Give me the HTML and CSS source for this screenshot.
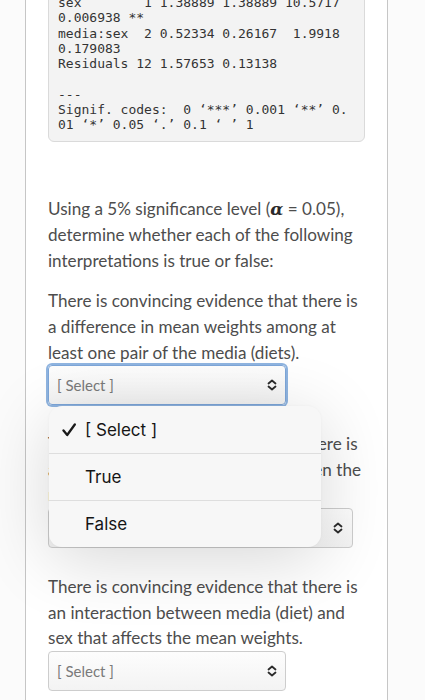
FILE: index.html
```html
<!DOCTYPE html>
<html>
<head>
<meta charset="utf-8">
<link rel="stylesheet" href="styles.css">
</head>
<body>
<div class="card">
<pre class="code">sex        1 1.38889 1.38889 10.5717 
0.006938 **
media:sex  2 0.52334 0.26167  1.9918 
0.179083
Residuals 12 1.57653 0.13138

---
Signif. codes:  0 ‘***’ 0.001 ‘**’ 0.
01 ‘*’ 0.05 ‘.’ 0.1 ‘ ’ 1</pre>
<p class="intro">Using a 5% significance level (<span class="alpha">α</span> = 0.05), determine whether each of the following interpretations is true or false:</p>
<div class="items">
  <div class="item">
    <p class="stmt">There is convincing evidence that there is a difference in mean weights among at least one pair of the media (diets).</p>
    <div class="select-wrap">
      <div class="select focused">
        <span class="sel-text">[ Select ]</span>
        <svg class="chev" width="10" height="12" viewBox="0 0 10 12"><path d="M1.5 4.5 L5 1.5 L8.5 4.5 M1.5 7.5 L5 10.5 L8.5 7.5" fill="none" stroke="#2b2b2b" stroke-width="1.8" stroke-linecap="round" stroke-linejoin="round"/></svg>
      </div>
      <div class="menu">
        <div class="opt">
          <svg class="check" width="14" height="14" viewBox="0 0 14 14"><path d="M1.5 7.5 L5.2 12 L12.8 1.5" fill="none" stroke="#1a1a1a" stroke-width="2.3" stroke-linecap="round" stroke-linejoin="round"/></svg>
          <span>[ Select ]</span>
        </div>
        <div class="opt"><span>True</span></div>
        <div class="opt"><span>False</span></div>
      </div>
    </div>
  </div>
  <div class="item">
    <p class="stmt">There is convincing evidence that there is a difference in mean weights between the males and females.</p>
    <div class="select wide">
      <span class="sel-text">[ Select ]</span>
      <svg class="chev" width="10" height="12" viewBox="0 0 10 12"><path d="M1.5 4.5 L5 1.5 L8.5 4.5 M1.5 7.5 L5 10.5 L8.5 7.5" fill="none" stroke="#2b2b2b" stroke-width="1.8" stroke-linecap="round" stroke-linejoin="round"/></svg>
    </div>
  </div>
  <div class="item">
    <p class="stmt">There is convincing evidence that there is an interaction between media (diet) and sex that affects the mean weights.</p>
    <div class="select">
      <span class="sel-text">[ Select ]</span>
      <svg class="chev" width="10" height="12" viewBox="0 0 10 12"><path d="M1.5 4.5 L5 1.5 L8.5 4.5 M1.5 7.5 L5 10.5 L8.5 7.5" fill="none" stroke="#2b2b2b" stroke-width="1.8" stroke-linecap="round" stroke-linejoin="round"/></svg>
    </div>
  </div>
</div>
</div>
</body>
</html>
```

FILE: styles.css
```css
html, body {
  margin: 0;
  padding: 0;
  background: #fbfbfb;
  overflow: hidden;
}

.card {
  margin: -20px 0 0 25px;
  min-height: 760px;
  border: 1px solid #c6c6c6;
  background: #ffffff;
  padding: 0 22px;
  box-sizing: content-box;
  width: 317px;
}

.code {
  margin: 0;
  padding: 13px 13px 8px 9px;
  border: 1px solid #dadada;
  border-radius: 6px;
  background: #f3f3f3;
  font-family: "DejaVu Sans Mono", monospace;
  font-size: 13px;
  line-height: 15.3px;
  color: #333333;
  white-space: pre;
  overflow: hidden;
}

.intro, .stmt {
  font-family: Lato, "Noto Sans", sans-serif;
  font-size: 17.1px;
  line-height: 25.6px;
  color: #4d4d4d;
  margin: 0;
}

.intro {
  margin-top: 54px;
  margin-bottom: 15px;
}

.alpha {
  font-family: "DejaVu Serif", serif;
  font-weight: bold;
  font-style: italic;
  color: #2a2a2a;
}

.items {
  display: flex;
  flex-direction: column;
  gap: 26px;
}

.select-wrap {
  position: relative;
  width: 238px;
}

.select {
  display: flex;
  align-items: center;
  justify-content: space-between;
  box-sizing: border-box;
  width: 238px;
  height: 40px;
  padding: 0 8px 0 8px;
  border: 1px solid #cdcdcd;
  border-radius: 4px;
  background: linear-gradient(#fdfdfd, #f3f3f3);
  font-family: Lato, "Noto Sans", sans-serif;
  font-size: 15px;
  color: #7a7a7a;
}

.select.wide {
  width: 305px;
  padding-right: 9px;
}

.select.focused {
  border-color: #7da6d8;
  box-shadow: 0 0 0 2px #8fb4e0;
}

.chev {
  display: block;
}

.menu {
  position: absolute;
  left: 1px;
  top: 41px;
  width: 272px;
  background: #f7f7f7;
  border-radius: 13px;
  box-shadow: 0 12px 70px rgba(0, 0, 0, 0.16), 0 0 3px rgba(0, 0, 0, 0.04);
  z-index: 5;
  overflow: hidden;
}

.opt {
  position: relative;
  height: 47px;
  display: flex;
  align-items: center;
  padding-left: 36px;
  font-family: Inter, Roboto, sans-serif;
  font-size: 17px;
  color: #151515;
  border-top: 1px solid #dedede;
  box-sizing: border-box;
}

.opt:first-child {
  border-top: none;
}

.check {
  position: absolute;
  left: 13px;
  top: 17px;
}
```
